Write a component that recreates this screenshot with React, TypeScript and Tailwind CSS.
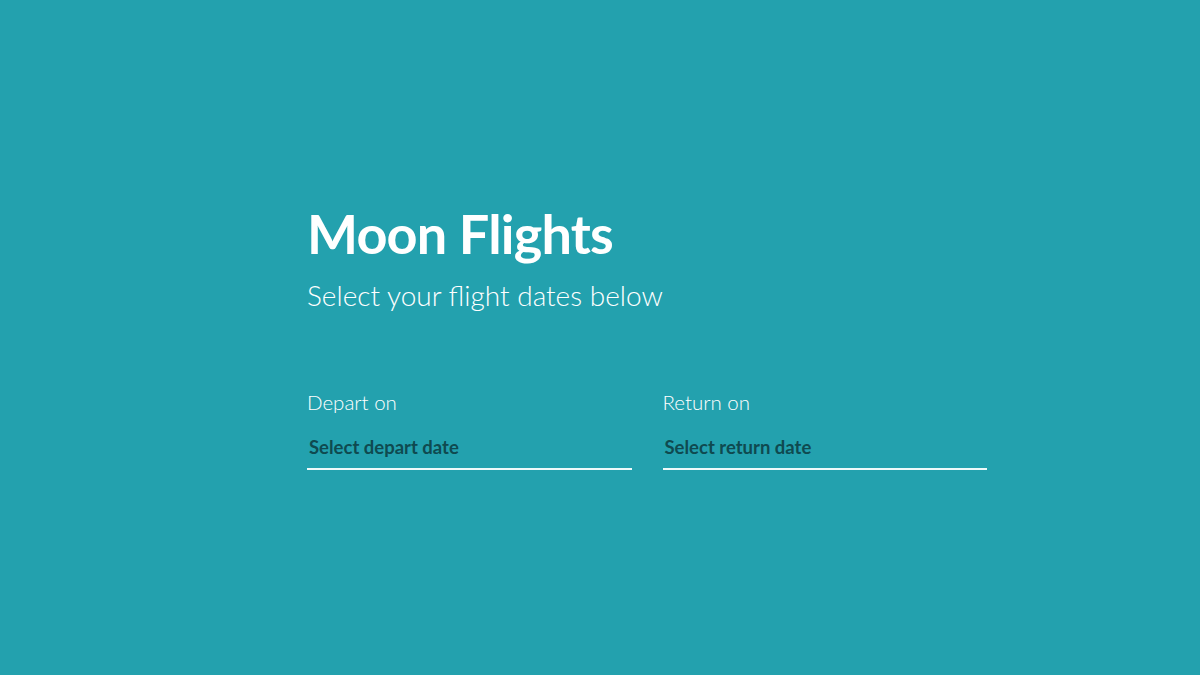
export default function App() {
  return (
    <div
      className="w-full h-[675px] bg-[#23a1ae] text-white flex items-center"
      style={{ fontFamily: 'Lato, "Noto Sans", sans-serif' }}
    >
      <div className="ml-[307px] w-[680px] mt-[2px]">
        <h1 className="text-[54px] font-bold leading-none tracking-[-0.8px]">Moon Flights</h1>
        <p className="mt-[20px] text-[28px] font-light leading-none">Select your flight dates below</p>

        <div className="mt-[83px] grid grid-cols-2 gap-[31px]">
          {[
            { label: 'Depart on', placeholder: 'Select depart date' },
            { label: 'Return on', placeholder: 'Select return date' },
          ].map(({ label, placeholder }) => (
            <div key={label}>
              <div className="text-[20.5px] font-light leading-none">{label}</div>
              <div className="mt-[25px] pb-[12px] border-b-2 border-[#eef9fa] px-[2px] text-[18.5px] font-bold leading-none text-[#0f4a50]">
                {placeholder}
              </div>
            </div>
          ))}
        </div>
      </div>
    </div>
  );
}
